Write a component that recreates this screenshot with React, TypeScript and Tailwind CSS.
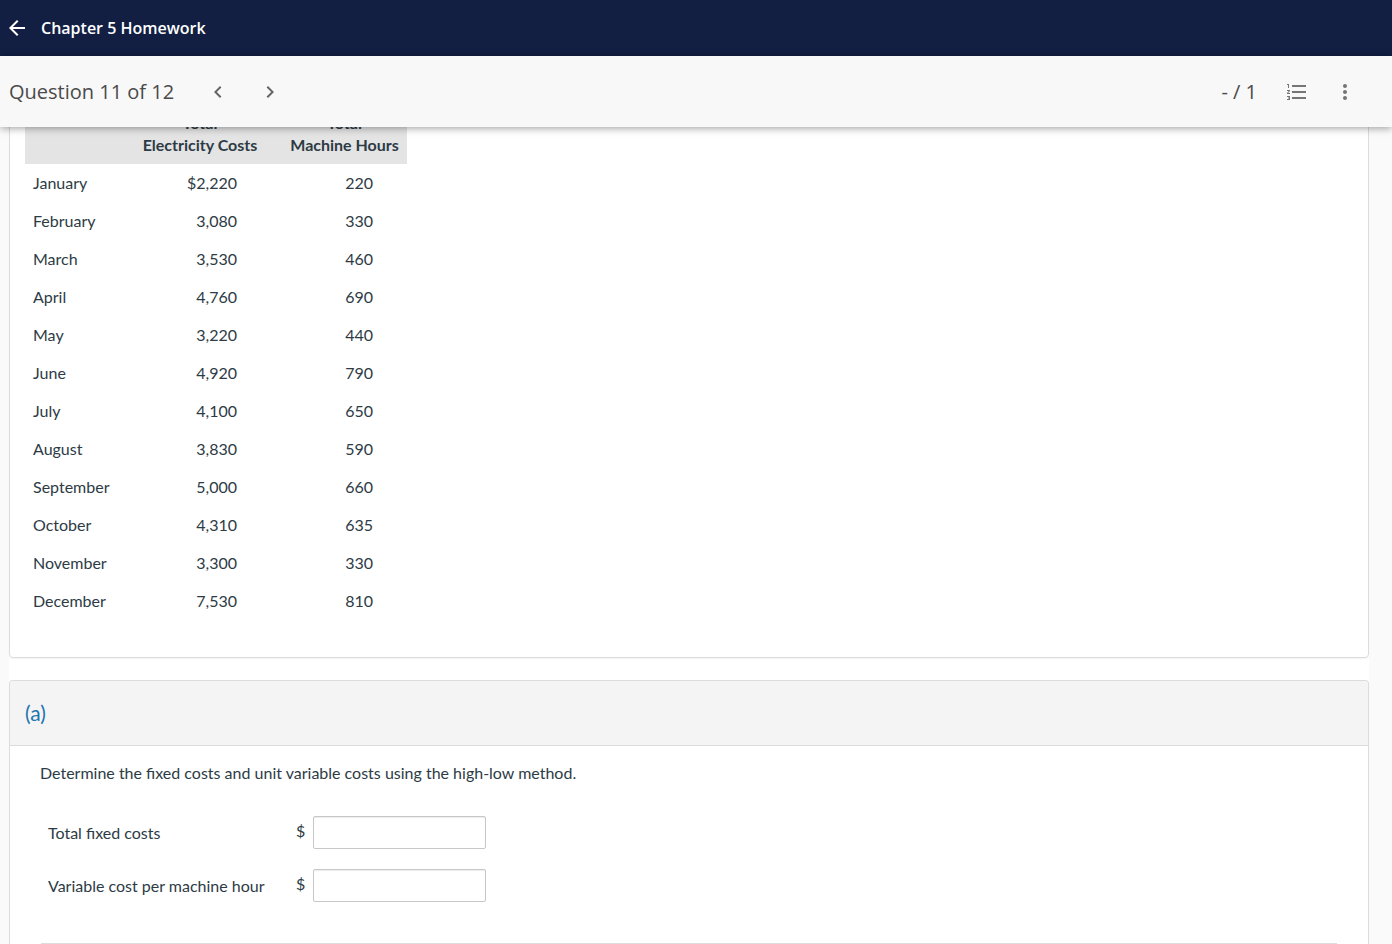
import React from "react";
import {
  MdArrowBack,
  MdChevronLeft,
  MdChevronRight,
  MdFormatListNumbered,
  MdMoreVert,
} from "react-icons/md";

const months: [string, string, string][] = [
  ["January", "$2,220", "220"],
  ["February", "3,080", "330"],
  ["March", "3,530", "460"],
  ["April", "4,760", "690"],
  ["May", "3,220", "440"],
  ["June", "4,920", "790"],
  ["July", "4,100", "650"],
  ["August", "3,830", "590"],
  ["September", "5,000", "660"],
  ["October", "4,310", "635"],
  ["November", "3,300", "330"],
  ["December", "7,530", "810"],
];

const fields = [
  { id: "fixed-costs", label: "Total fixed costs" },
  { id: "variable-cost", label: "Variable cost per machine hour" },
];

function IconButton({ label, children }: { label: string; children: React.ReactNode }) {
  return (
    <button type="button" aria-label={label} className="flex size-6 items-center justify-center">
      {children}
    </button>
  );
}

function CostTable() {
  return (
    <table className="border-collapse">
      <thead>
        <tr className="bg-[#e4e4e4] align-bottom">
          <td className="w-[93px]" />
          <td className="w-4" />
          <th scope="col" className="w-[132px] p-2 text-center font-bold">
            Total
            <br />
            Electricity Costs
          </th>
          <td className="w-4" />
          <th scope="col" className="w-[125px] p-2 text-center font-bold">
            Total
            <br />
            Machine Hours
          </th>
        </tr>
      </thead>
      <tbody>
        {months.map(([month, cost, hours]) => (
          <tr key={month}>
            <th scope="row" className="p-2 text-left font-normal">
              {month}
            </th>
            <td />
            <td className="py-2 pr-[29px] text-right">{cost}</td>
            <td />
            <td className="py-2 pr-[34px] text-right">{hours}</td>
          </tr>
        ))}
      </tbody>
    </table>
  );
}

export default function App() {
  return (
    <div className="flex h-screen flex-col overflow-hidden bg-[#fafafa] font-['Lato',sans-serif] text-base leading-[22px] text-[#2d3b45]">
      <header className="flex h-14 shrink-0 items-center gap-3 bg-[#121f43] px-[5px] font-['Open_Sans',sans-serif] text-white">
        <IconButton label="Back">
          <MdArrowBack className="size-6" />
        </IconButton>
        <h1 className="text-base font-semibold">Chapter 5 Homework</h1>
      </header>

      <div className="z-10 flex h-[71px] shrink-0 items-center justify-between bg-[#f8f8f8] pr-[35px] pl-[9px] font-['Open_Sans',sans-serif] text-xl text-[#4a4a4a] shadow-[0_1px_8px_rgba(0,0,0,0.4)]">
        <div className="flex items-center gap-8">
          <h2>Question 11 of 12</h2>
          <nav className="flex gap-7 text-[#666]">
            <IconButton label="Previous question">
              <MdChevronLeft className="size-6" />
            </IconButton>
            <IconButton label="Next question">
              <MdChevronRight className="size-6" />
            </IconButton>
          </nav>
        </div>
        <div className="flex items-center text-[#757575]">
          <span className="mr-7 text-[#4a4a4a]">- / 1</span>
          <div className="flex gap-6">
            <IconButton label="Question list">
              <MdFormatListNumbered className="size-6" />
            </IconButton>
            <IconButton label="More options">
              <MdMoreVert className="size-6" />
            </IconButton>
          </div>
        </div>
      </div>

      <main className="min-h-0 flex-1 overflow-hidden pr-[23px] pl-[9px]">
        <div className="flex min-h-full flex-col gap-[22px] bg-white">
          <section className="-mt-10 rounded border border-[#dcdcdc] px-[15px] pt-4 pb-[37px] shadow-[0_1px_1px_rgba(0,0,0,0.05)]">
            <CostTable />
          </section>

          <section className="rounded-t border border-b-0 border-[#dcdcdc]">
            <h3 className="flex h-[65px] items-center rounded-t border-b border-[#dcdcdc] bg-[#f4f4f4] px-[15px] text-[21px] text-[#1d74b0]">
              (a)
            </h3>
            <div className="px-[31px] pt-4 pb-10">
              <p className="-ml-px">
                Determine the fixed costs and unit variable costs using the high-low method.
              </p>
              <div className="flex flex-col gap-5 px-[7px] pt-8 pb-[41px]">
                {fields.map(({ id, label }) => (
                  <div key={id} className="flex h-[33px] items-center">
                    <label htmlFor={id} className="w-[248px]">
                      {label}
                    </label>
                    <span className="w-[17px] pb-1">$</span>
                    <input
                      id={id}
                      type="text"
                      className="h-[33px] w-[173px] rounded-xs border border-[#c7c7c7] bg-white px-2 shadow-[inset_0_1px_1px_rgba(0,0,0,0.075)]"
                    />
                  </div>
                ))}
              </div>
              <hr className="border-[#dcdcdc]" />
            </div>
          </section>
        </div>
      </main>
    </div>
  );
}
